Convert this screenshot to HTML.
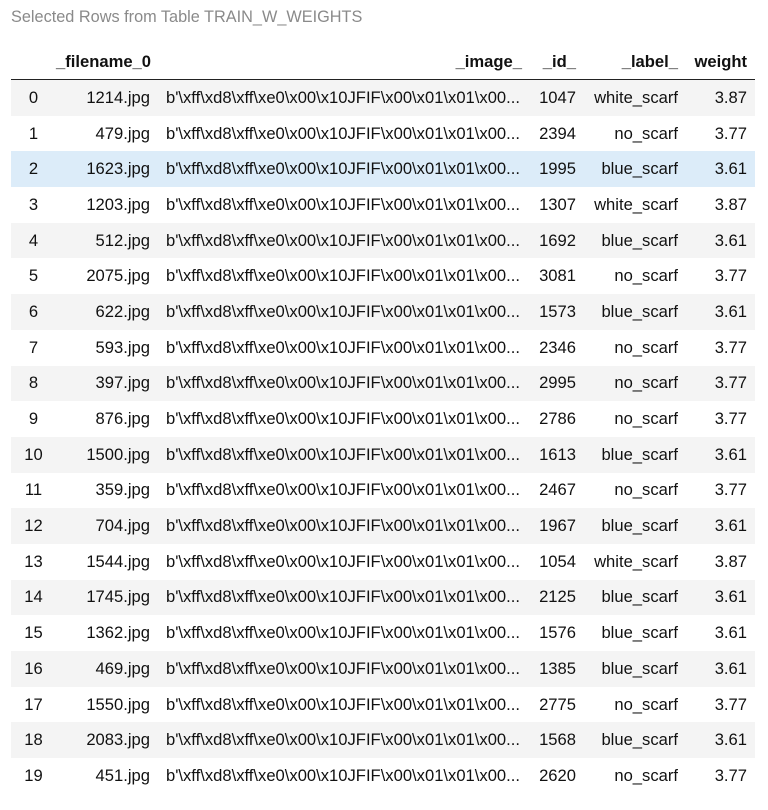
<!DOCTYPE html>
<html><head><style>
body{margin:0;background:#fff;font-family:"Liberation Sans",Arial,sans-serif;width:768px;height:810px;overflow:hidden}
.t{position:absolute;left:11px;top:8px;font-size:16.3px;color:#8a8a8a}
table{position:absolute;left:11px;top:44px;width:744px;border-collapse:collapse;font-size:16.6px;color:#111;table-layout:fixed}
th{font-weight:bold;text-align:right;height:35px;padding:0;border-bottom:1.5px solid #222;vertical-align:middle}
td{height:35.7px;padding:0;text-align:right;white-space:nowrap;overflow:hidden}
tr:nth-child(odd) td{background:#f4f4f4}
tr.h td{background:#dcecf9}
.c0{width:45px;text-align:center}
.c1{width:94px}
.c2{width:356px;padding-left:16px}
.c3{width:54px}
.c4{width:102px}
.c5{width:69px}
.c6{width:8px}
td.c2{text-align:left}
</style></head><body>
<div class="t">Selected Rows from Table TRAIN_W_WEIGHTS</div>
<table>
<thead><tr><th class="c0"></th><th class="c1">_filename_0</th><th class="c2">_image_</th><th class="c3">_id_</th><th class="c4">_label_</th><th class="c5">weight</th><th class="c6"></th></tr></thead>
<tbody>
<tr><td class="c0">0</td><td class="c1">1214.jpg</td><td class="c2">b'\xff\xd8\xff\xe0\x00\x10JFIF\x00\x01\x01\x00...</td><td class="c3">1047</td><td class="c4">white_scarf</td><td class="c5">3.87</td><td></td></tr>
<tr><td class="c0">1</td><td class="c1">479.jpg</td><td class="c2">b'\xff\xd8\xff\xe0\x00\x10JFIF\x00\x01\x01\x00...</td><td class="c3">2394</td><td class="c4">no_scarf</td><td class="c5">3.77</td><td></td></tr>
<tr class="h"><td class="c0">2</td><td class="c1">1623.jpg</td><td class="c2">b'\xff\xd8\xff\xe0\x00\x10JFIF\x00\x01\x01\x00...</td><td class="c3">1995</td><td class="c4">blue_scarf</td><td class="c5">3.61</td><td></td></tr>
<tr><td class="c0">3</td><td class="c1">1203.jpg</td><td class="c2">b'\xff\xd8\xff\xe0\x00\x10JFIF\x00\x01\x01\x00...</td><td class="c3">1307</td><td class="c4">white_scarf</td><td class="c5">3.87</td><td></td></tr>
<tr><td class="c0">4</td><td class="c1">512.jpg</td><td class="c2">b'\xff\xd8\xff\xe0\x00\x10JFIF\x00\x01\x01\x00...</td><td class="c3">1692</td><td class="c4">blue_scarf</td><td class="c5">3.61</td><td></td></tr>
<tr><td class="c0">5</td><td class="c1">2075.jpg</td><td class="c2">b'\xff\xd8\xff\xe0\x00\x10JFIF\x00\x01\x01\x00...</td><td class="c3">3081</td><td class="c4">no_scarf</td><td class="c5">3.77</td><td></td></tr>
<tr><td class="c0">6</td><td class="c1">622.jpg</td><td class="c2">b'\xff\xd8\xff\xe0\x00\x10JFIF\x00\x01\x01\x00...</td><td class="c3">1573</td><td class="c4">blue_scarf</td><td class="c5">3.61</td><td></td></tr>
<tr><td class="c0">7</td><td class="c1">593.jpg</td><td class="c2">b'\xff\xd8\xff\xe0\x00\x10JFIF\x00\x01\x01\x00...</td><td class="c3">2346</td><td class="c4">no_scarf</td><td class="c5">3.77</td><td></td></tr>
<tr><td class="c0">8</td><td class="c1">397.jpg</td><td class="c2">b'\xff\xd8\xff\xe0\x00\x10JFIF\x00\x01\x01\x00...</td><td class="c3">2995</td><td class="c4">no_scarf</td><td class="c5">3.77</td><td></td></tr>
<tr><td class="c0">9</td><td class="c1">876.jpg</td><td class="c2">b'\xff\xd8\xff\xe0\x00\x10JFIF\x00\x01\x01\x00...</td><td class="c3">2786</td><td class="c4">no_scarf</td><td class="c5">3.77</td><td></td></tr>
<tr><td class="c0">10</td><td class="c1">1500.jpg</td><td class="c2">b'\xff\xd8\xff\xe0\x00\x10JFIF\x00\x01\x01\x00...</td><td class="c3">1613</td><td class="c4">blue_scarf</td><td class="c5">3.61</td><td></td></tr>
<tr><td class="c0">11</td><td class="c1">359.jpg</td><td class="c2">b'\xff\xd8\xff\xe0\x00\x10JFIF\x00\x01\x01\x00...</td><td class="c3">2467</td><td class="c4">no_scarf</td><td class="c5">3.77</td><td></td></tr>
<tr><td class="c0">12</td><td class="c1">704.jpg</td><td class="c2">b'\xff\xd8\xff\xe0\x00\x10JFIF\x00\x01\x01\x00...</td><td class="c3">1967</td><td class="c4">blue_scarf</td><td class="c5">3.61</td><td></td></tr>
<tr><td class="c0">13</td><td class="c1">1544.jpg</td><td class="c2">b'\xff\xd8\xff\xe0\x00\x10JFIF\x00\x01\x01\x00...</td><td class="c3">1054</td><td class="c4">white_scarf</td><td class="c5">3.87</td><td></td></tr>
<tr><td class="c0">14</td><td class="c1">1745.jpg</td><td class="c2">b'\xff\xd8\xff\xe0\x00\x10JFIF\x00\x01\x01\x00...</td><td class="c3">2125</td><td class="c4">blue_scarf</td><td class="c5">3.61</td><td></td></tr>
<tr><td class="c0">15</td><td class="c1">1362.jpg</td><td class="c2">b'\xff\xd8\xff\xe0\x00\x10JFIF\x00\x01\x01\x00...</td><td class="c3">1576</td><td class="c4">blue_scarf</td><td class="c5">3.61</td><td></td></tr>
<tr><td class="c0">16</td><td class="c1">469.jpg</td><td class="c2">b'\xff\xd8\xff\xe0\x00\x10JFIF\x00\x01\x01\x00...</td><td class="c3">1385</td><td class="c4">blue_scarf</td><td class="c5">3.61</td><td></td></tr>
<tr><td class="c0">17</td><td class="c1">1550.jpg</td><td class="c2">b'\xff\xd8\xff\xe0\x00\x10JFIF\x00\x01\x01\x00...</td><td class="c3">2775</td><td class="c4">no_scarf</td><td class="c5">3.77</td><td></td></tr>
<tr><td class="c0">18</td><td class="c1">2083.jpg</td><td class="c2">b'\xff\xd8\xff\xe0\x00\x10JFIF\x00\x01\x01\x00...</td><td class="c3">1568</td><td class="c4">blue_scarf</td><td class="c5">3.61</td><td></td></tr>
<tr><td class="c0">19</td><td class="c1">451.jpg</td><td class="c2">b'\xff\xd8\xff\xe0\x00\x10JFIF\x00\x01\x01\x00...</td><td class="c3">2620</td><td class="c4">no_scarf</td><td class="c5">3.77</td><td></td></tr>
</tbody></table>
</body></html>
